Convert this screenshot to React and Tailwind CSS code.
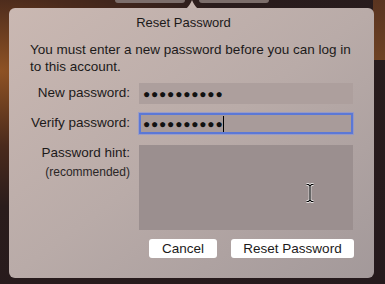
import React from 'react';

const font = { fontFamily: '"Liberation Sans", Arial, sans-serif' };

const Field = ({ label, focused }) => (
    <div className="flex items-center h-[21px]">
        <div className="w-[113px] text-right text-[13.5px] text-[#1c1a1a]">{label}</div>
        <div
            className={
                'ml-[9px] w-[216px] h-[21px] flex items-center ' +
                (focused
                    ? 'bg-[#a89b9a] border-2 border-[#5b78d6] shadow-[0_0_0_1px_rgba(120,140,230,0.5)] pl-[2px]'
                    : 'bg-[#ad9f9d] pl-[4px]')
            }
        >
            <span className="text-[12px] tracking-[0.8px] text-[#111] leading-none">●●●●●●●●●●</span>
            {focused && <span className="w-px h-[16px] bg-black"></span>}
        </div>
    </div>
);

export default function App() {
    return (
        <div
            className="relative w-[385px] h-[284px] overflow-hidden bg-[radial-gradient(ellipse_at_0%_25%,#8e5224_0%,#4a2a1c_25%,#2a1c1c_45%,#251a1d_100%)]"
            style={font}
        >
            {/* things behind the popover top */}
            <div className="absolute left-[115px] top-0 w-[70px] h-[3px] bg-[#7c6e6b] rounded-b-[3px]"></div>
            <div className="absolute left-[199px] top-0 w-[70px] h-[3px] bg-[#7c6e6b] rounded-b-[3px]"></div>
            <div className="absolute right-0 top-0 w-[12px] h-[60px] bg-gradient-to-b from-[#5a3420] to-[#6e4224]"></div>

            {/* popover arrow */}
            <svg className="absolute left-[180px] top-0" width="24" height="10" viewBox="0 0 24 10">
                <path d="M0 10 C6 10 9 7 12 0 C15 7 18 10 24 10 Z" fill="#c5b3ad" />
            </svg>

            <div className="absolute left-[9px] top-[8px] w-[365px] h-[270px] rounded-[6px] bg-gradient-to-br from-[#cab8b2] via-[#b9aba8] to-[#a3999a] pt-[7px] px-[21px]">
                <div className="text-center text-[13px] text-[#1c1a1a] h-[16px] leading-[16px] pr-[16px]">Reset Password</div>
                <div className="mt-[10px] text-[13.5px] leading-[17px] text-[#1c1a1a]">
                    You must enter a new password before you can log in to this account.
                </div>

                <div className="mt-[8px] -ml-[12px] flex flex-col gap-[9px]">
                    <Field label="New password:" />
                    <Field label="Verify password:" focused />
                    <div className="flex mt-[2px]">
                        <div className="w-[113px] text-right text-[#1c1a1a]">
                            <div className="text-[13.5px] leading-[16px]">Password hint:</div>
                            <div className="text-[12px] leading-[14px] mt-[4px] text-[#2a2626]">(recommended)</div>
                        </div>
                        <div className="relative ml-[9px] w-[216px] h-[85px] bg-[#9b8f8f]">
                            <svg className="absolute left-[166px] top-[38px]" width="10" height="20" viewBox="0 0 10 20">
                                <path d="M1.5 1.5 H3.5 L5 3 L6.5 1.5 H8.5 M5 3 V17 M1.5 18.5 H3.5 L5 17 L6.5 18.5 H8.5" stroke="#fff" strokeWidth="2.6" fill="none" />
                                <path d="M1.5 1.5 H3.5 L5 3 L6.5 1.5 H8.5 M5 3 V17 M1.5 18.5 H3.5 L5 17 L6.5 18.5 H8.5" stroke="#000" strokeWidth="1.2" fill="none" />
                            </svg>
                        </div>
                    </div>
                </div>

                <div className="mt-[9px] flex justify-end gap-[14px] mr-[-1px]">
                    <button className="w-[68px] h-[19px] bg-white rounded-[3px] text-[13.5px] leading-[19px] text-[#1c1a1a]">Cancel</button>
                    <button className="w-[123px] h-[19px] bg-white rounded-[3px] text-[13.5px] leading-[19px] text-[#1c1a1a]">Reset Password</button>
                </div>
            </div>
        </div>
    );
}
